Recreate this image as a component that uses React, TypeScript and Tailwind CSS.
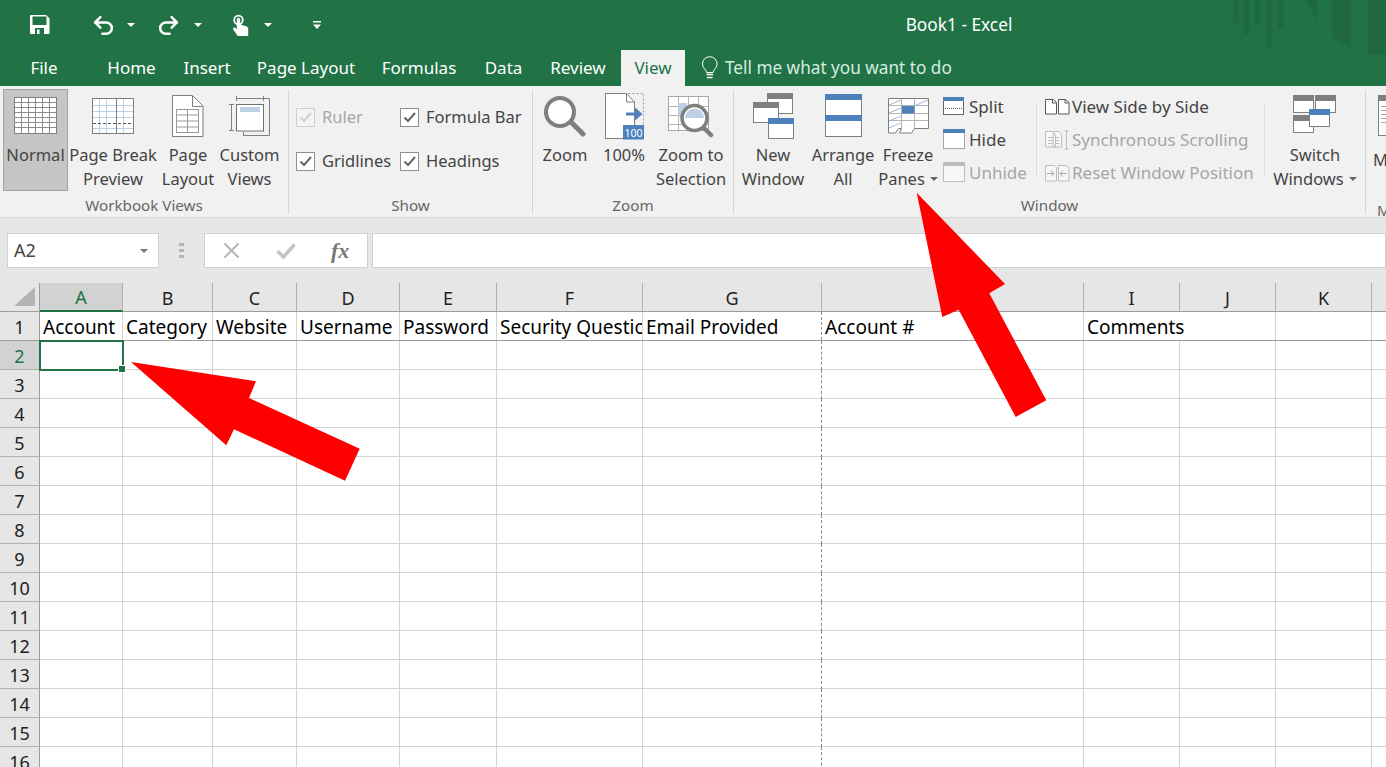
import type { ReactNode } from "react";
import { Undo2, Redo2 } from "lucide-react";

const BLUE = "#4e81bb";
const LINE = "#7f7f7f";

const columns = [
  { label: "A", w: "w-[83px]", selected: true },
  { label: "B", w: "w-[90px]" },
  { label: "C", w: "w-[84px]" },
  { label: "D", w: "w-[103px]" },
  { label: "E", w: "w-[97px]" },
  { label: "F", w: "w-[146px]" },
  { label: "G", w: "w-[179px]" },
  { label: "", w: "w-[262px]" },
  { label: "I", w: "w-[96px]" },
  { label: "J", w: "w-[96px]" },
  { label: "K", w: "w-[96px]" },
  { label: "", w: "w-[60px]" },
];

const firstRow = ["Account", "Category", "Website", "Username", "Password", "Security Question", "Email Provided", "Account #", "Comments", "", "", ""];
const rows = Array.from({ length: 15 }, (_, i) => i + 2);

const tabs = [
  { name: "File", w: "w-[88px]" },
  { name: "Home", w: "w-[77px] ml-[5px]" },
  { name: "Insert", w: "w-[74px]" },
  { name: "Page Layout", w: "w-[124px]" },
  { name: "Formulas", w: "w-[102px]" },
  { name: "Data", w: "w-[67px]" },
  { name: "Review", w: "w-[82px]" },
];

function Caret({ color = "#fff", className = "" }: { color?: string; className?: string }) {
  return (
    <svg width="8" height="4" viewBox="0 0 8 4" className={className}>
      <path d="M0 0h8L4 4z" fill={color} />
    </svg>
  );
}

function Icon({ box, children, className = "" }: { box: [number, number, number, number]; children: ReactNode; className?: string }) {
  return (
    <svg width={box[2]} height={box[3]} viewBox={box.join(" ")} fill="none" className={`flex-none ${className}`}>
      {children}
    </svg>
  );
}

function SaveIcon() {
  return (
    <Icon box={[30, 14, 20, 20]} className="ml-[30px]">
      <path d="M31 14h15l3.500 3.500V32a1 1 0 0 1-1 1H31a1 1 0 0 1-1-1V15a1 1 0 0 1 1-1z" fill="#fff" />
      <rect x="32.500" y="15.500" width="14" height="8.500" fill="#217346" />
      <rect x="35" y="27" width="9" height="6" fill="#217346" />
      <rect x="37" y="28.500" width="2.500" height="4.500" fill="#fff" />
    </Icon>
  );
}

function TouchIcon() {
  return (
    <Icon box={[230, 12, 18, 23]} className="ml-[29px]">
      <circle cx="237.500" cy="18" r="4.300" stroke="#fff" strokeWidth="1.800" />
      <path d="M235.800 17.500a1.700 1.700 0 0 1 3.400 0v5l6 1.800c1.400.5 2 1.300 2 2.700V34h-10.500l-4.500-6.500c-.8-1.300.8-2.700 2-1.700l1.600 1.400z" fill="#fff" />
    </Icon>
  );
}

function BulbIcon() {
  return (
    <Icon box={[700, 56, 19, 24]}>
      <path d="M706.500 72.500c0-3-4-4-4-8.500a7.300 7.300 0 0 1 14.600 0c0 4.500-4 5.500-4 8.500z" stroke="#fff" strokeWidth="1" />
      <path d="M706.500 74.500h6.600M707 77.500h5.600" stroke="#fff" strokeWidth="1.400" />
    </Icon>
  );
}

function Watermark() {
  return (
    <svg width="160" height="56" viewBox="1226 0 160 56" className="absolute right-0 top-0">
      <g fill="#1f6840">
        <rect x="1233" width="5.500" height="23" />
        <rect x="1244" width="5.500" height="34" />
        <rect x="1255" width="5.500" height="23" />
        <rect x="1266" width="5.500" height="47" />
        <rect x="1278" width="5.500" height="29" />
        <path d="M1305 0h12v20z" />
        <path d="M1332 0h19v48l-19-10z" />
        <path d="M1368 0h18v55h-18z" />
      </g>
    </svg>
  );
}

function NormalIcon() {
  return (
    <Icon box={[14, 97, 43, 37]} className="mt-[7px]">
      <rect x="14.500" y="97.500" width="42" height="36" fill="#fff" stroke={LINE} />
      <path d="M21.500 98v35M28.500 98v35M35.500 98v35M42.500 98v35M49.500 98v35M15 102.500h41M15 107.500h41M15 112.500h41M15 117.500h41M15 122.500h41M15 127.500h41" stroke="#8c8c8c" />
    </Icon>
  );
}

function PageBreakIcon() {
  return (
    <Icon box={[92, 98, 42, 36]} className="mt-[8px]">
      <rect x="92.500" y="98.500" width="41" height="35" fill="#fff" />
      <path d="M99.500 99v34M106.500 99v34M123.500 99v34M104 105.500h29M93 105.500h29M93 111.500h40M93 117.500h40M93 128.500h40" stroke="#bcd0e6" />
      <path d="M116.500 99v34" stroke="#7f7f7f" />
      <path d="M93 123.500h40" stroke="#555" strokeDasharray="3 2" />
      <rect x="92.500" y="98.500" width="41" height="35" stroke={LINE} />
    </Icon>
  );
}

function PageLayoutIcon() {
  return (
    <Icon box={[172, 95, 32, 43]} className="mt-[5px]">
      <path d="M172.500 95.500h20l10.500 10.500v30.500h-30.500z" fill="#fff" stroke={LINE} />
      <path d="M192.500 96v10.500h10" stroke={LINE} />
      <rect x="176.500" y="109.500" width="22" height="23" stroke="#9a9a9a" />
      <path d="M187.500 110v22M177 115h21M177 121h21M177 127h21" stroke="#9a9a9a" />
    </Icon>
  );
}

function CustomViewsIcon() {
  return (
    <Icon box={[228, 96, 43, 42]} className="mt-[6px]">
      <path d="M236.500 96v5M263.500 96v5M237 98.500h26" stroke={LINE} />
      <path d="M229 104.500h5M229 130.500h5M231.500 105v25" stroke={LINE} />
      <path d="M264 98.500h5.500v37H243.500V132" stroke={LINE} />
      <rect x="236.500" y="104.500" width="27" height="26.500" fill="#fff" stroke="#6f6f6f" />
      <rect x="240" y="107" width="20" height="5" fill="#bccfe3" />
    </Icon>
  );
}

function ZoomIcon() {
  return (
    <Icon box={[545, 95, 42, 43]} className="mt-[5px]">
      <circle cx="561" cy="112" r="14" fill="#fff" stroke={LINE} strokeWidth="4" />
      <path d="M572 122l12 12" stroke={LINE} strokeWidth="5" strokeLinecap="round" />
    </Icon>
  );
}

function HundredIcon() {
  return (
    <Icon box={[604, 92, 41, 48]} className="mt-[2px]">
      <path d="M605.500 138.500h38v-45h-38" stroke="#9a9a9a" strokeDasharray="2 2" />
      <path d="M605.500 93.500h21l8 8.500v36.500h-29z" fill="#fff" stroke={LINE} />
      <path d="M626.500 94v8h8" stroke={LINE} />
      <path d="M626 112.500h9v-5l7.500 6.500-7.500 6.500v-5h-9z" fill={BLUE} />
      <rect x="623" y="125" width="21" height="14.500" fill={BLUE} />
      <text x="633.500" y="136.500" textAnchor="middle" fill="#fff" fontSize="10.500" fontFamily="Noto Sans, sans-serif">100</text>
    </Icon>
  );
}

function ZoomSelectionIcon() {
  return (
    <Icon box={[670, 95, 46, 43]} className="mt-[5px]">
      <rect x="670.500" y="96.500" width="40" height="34" fill="#fff" stroke="#a6a6a6" />
      <path d="M680.500 97v33M690.500 97v33M700.500 97v33M671 106.500h39M671 115.500h39M671 124.500h39" stroke="#b5b5b5" />
      <rect x="680" y="103" width="9" height="14" fill="#bcd0e6" />
      <circle cx="696.500" cy="118" r="12.500" fill="#fff" />
      <path d="M687 118a9.500 9.500 0 0 1 19 0z" fill="#bcd0e6" />
      <circle cx="696.500" cy="118" r="12.500" stroke={LINE} strokeWidth="3.500" />
      <path d="M706 128l7 7" stroke={LINE} strokeWidth="4.500" strokeLinecap="round" />
    </Icon>
  );
}

function MiniWindow({ x, y, w, h, bar }: { x: number; y: number; w: number; h: number; bar: string }) {
  return (
    <>
      <rect x={x + 0.5} y={y + 0.5} width={w} height={h} fill="#fff" stroke={LINE} />
      <rect x={x} y={y} width={w + 1} height="6" fill={bar} />
    </>
  );
}

function NewWindowIcon() {
  return (
    <Icon box={[753, 93, 41, 46]} className="mt-[3px]">
      <MiniWindow x={767} y={93} w={25} h={20} bar="#7f7f7f" />
      <MiniWindow x={753} y={102} w={25} h={20} bar="#7f7f7f" />
      <MiniWindow x={768} y={118} w={25} h={20} bar={BLUE} />
    </Icon>
  );
}

function ArrangeIcon() {
  return (
    <Icon box={[825, 94, 37, 44]} className="mt-[4px]">
      <rect x="825.500" y="94.500" width="36" height="42" fill="#fff" stroke={LINE} />
      <rect x="825" y="94" width="37" height="6" fill={BLUE} />
      <rect x="825" y="115" width="37" height="6" fill={BLUE} />
    </Icon>
  );
}

function FreezeIcon() {
  return (
    <Icon box={[888, 98, 41, 36]} className="mt-[8px]">
      <path d="M888.500 98.500h40v30h-14l-3 4.500h-12l2-4.500h-3l-3 4.500h-7z" fill="#fff" stroke={LINE} />
      <path d="M889 105.500h39M889 113.500h39M889 120.500h39M901.500 99v29M914.500 99v29" stroke="#b5b5b5" />
      <path d="M889 105l12-5M889 113l12-5M889 121l12-5M889 128l12-5M914 106l14-6" stroke="#9dbbdc" />
      <rect x="902" y="106" width="12.500" height="7.500" fill={BLUE} />
    </Icon>
  );
}

function SwitchIcon() {
  return (
    <Icon box={[1293, 95, 44, 39]} className="mt-[5px]">
      <MiniWindow x={1293} y={95} w={20} h={17} bar="#7f7f7f" />
      <MiniWindow x={1315} y={95} w={20} h={17} bar="#7f7f7f" />
      <MiniWindow x={1293} y={115} w={20} h={17} bar="#7f7f7f" />
      <MiniWindow x={1309} y={109} w={20} h={17} bar={BLUE} />
    </Icon>
  );
}

function SplitIcon() {
  return (
    <Icon box={[943, 97, 22, 19]}>
      <rect x="943.500" y="97.500" width="20" height="17" fill="#fff" stroke="#666" />
      <rect x="943" y="97" width="21" height="4" fill={BLUE} />
      <path d="M945 108.500h17" stroke="#555" strokeDasharray="1 1" />
    </Icon>
  );
}

function HideIcon() {
  return (
    <Icon box={[943, 129, 23, 21]}>
      <rect x="943.500" y="129.500" width="21" height="19" fill="#fff" stroke="#555" strokeDasharray="1 1" />
      <rect x="943" y="129" width="22" height="4" fill={BLUE} />
    </Icon>
  );
}

function UnhideIcon() {
  return (
    <Icon box={[943, 162, 23, 21]}>
      <rect x="943.500" y="162.500" width="21" height="19" fill="#f7f7f7" stroke="#bdbdbd" />
      <rect x="943" y="162" width="22" height="4" fill="#bdbdbd" />
    </Icon>
  );
}

function SideBySideIcon() {
  return (
    <Icon box={[1045, 98, 25, 16]}>
      <path d="M1045.500 98.500h8l3 3v11.500h-11zM1058.500 98.500h7l3.500 3v11.500h-10.500z" fill="#fff" stroke="#555" />
      <path d="M1052.500 99v3h3.500M1065 99v3h3.500" stroke="#555" />
    </Icon>
  );
}

function SyncIcon() {
  return (
    <Icon box={[1045, 130, 25, 22]}>
      <path d="M1045.500 132.500h7l3 3v12.500h-10zM1053.500 132.500h5l3 3v12.500h-8.500z" fill="#f7f7f7" stroke="#bdbdbd" />
      <path d="M1048 138.500h5M1048 141.500h5M1048 144.500h5M1055 138.500h4M1055 141.500h4M1055 144.500h4" stroke="#bdbdbd" />
      <path d="M1066.500 131v20M1064.500 133l2-2 2 2M1064.500 149l2 2 2-2" stroke="#bdbdbd" />
    </Icon>
  );
}

function ResetIcon() {
  return (
    <Icon box={[1045, 163, 25, 18]}>
      <path d="M1045.500 164.500h9l2 2v13.500h-11zM1058.500 164.500h8l2.500 2.500v13h-10.500z" fill="#f7f7f7" stroke="#bdbdbd" />
      <path d="M1047 172.500h7M1051 169.500l3 3-3 3M1067 172.500h-7M1063 169.500l-3 3 3 3" stroke="#a6a6a6" />
    </Icon>
  );
}

function MacroIcon() {
  return (
    <Icon box={[1378, 95, 8, 44]} className="mt-[5px]">
      <rect x="1378.500" y="95.500" width="20" height="40" fill="#fff" stroke={LINE} />
      <rect x="1378" y="95" width="20" height="6" fill="#7f7f7f" />
      <path d="M1381 106.500h8M1381 110.500h8M1381 114.500h8M1381 118.500h8M1381 122.500h8" stroke="#a6a6a6" />
    </Icon>
  );
}

function BigButton({ lines, icon, w, caret, active, className = "" }: { lines: string[]; icon: ReactNode; w: string; caret?: boolean; active?: boolean; className?: string }) {
  return (
    <div className={`${w} ${className} h-[100px] flex-none flex flex-col items-center ${active ? "bg-[#c5c5c5] outline outline-1 outline-[#a3a3a3]" : ""}`}>
      <div className="h-[53px] flex-none flex justify-center items-start">{icon}</div>
      {lines.map((line, i) => (
        <div key={line} className="leading-[24px] whitespace-nowrap flex items-center gap-[5px]">
          {line}
          {caret && i === lines.length - 1 && <Caret color="#666" />}
        </div>
      ))}
    </div>
  );
}

function Group({ label, w, children }: { label: string; w: string; children: ReactNode }) {
  return (
    <div className={`${w} flex-none mt-[4px] h-[124px] flex flex-col border-r border-[#d4d4d4]`}>
      <div className="h-[100px] flex">{children}</div>
      <div className="h-[24px] flex items-end justify-center text-[15.2px] leading-[18px] text-[#666]">{label}</div>
    </div>
  );
}

function Check({ label, disabled }: { label: string; disabled?: boolean }) {
  return (
    <div className={`flex items-center gap-[7px] h-[44px] ${disabled ? "text-[#a6a6a6]" : ""}`}>
      <div className={`w-[19px] h-[19px] flex-none border flex items-center justify-center ${disabled ? "border-[#cfcfcf] bg-[#f4f4f4]" : "border-[#8f8f8f] bg-white"}`}>
        <svg width="13" height="11" viewBox="0 0 13 11" fill="none">
          <path d="M1.500 5.500l3.500 3.500 7-8" stroke={disabled ? "#cfcfcf" : "#666"} strokeWidth="2" />
        </svg>
      </div>
      {label}
    </div>
  );
}

function SmallRow({ icon, label, slot, disabled }: { icon: ReactNode; label: string; slot: string; disabled?: boolean }) {
  return (
    <div className={`h-[33px] flex items-center whitespace-nowrap text-[17px] ${disabled ? "text-[#a6a6a6]" : ""}`}>
      <div className={`${slot} flex-none flex`}>{icon}</div>
      {label}
    </div>
  );
}

function Ribbon() {
  return (
    <div className="h-[132px] flex bg-[#f1f1f1] border-b border-[#d5d5d5] text-[#444] text-[16.500px] overflow-hidden">
      <Group label="Workbook Views" w="w-[289px]">
        <BigButton lines={["Normal"]} icon={<NormalIcon />} w="w-[63px]" active className="ml-[4px]" />
        <BigButton lines={["Page Break", "Preview"]} icon={<PageBreakIcon />} w="w-[90px]" className="ml-[1px]" />
        <BigButton lines={["Page", "Layout"]} icon={<PageLayoutIcon />} w="w-[60px]" />
        <BigButton lines={["Custom", "Views"]} icon={<CustomViewsIcon />} w="w-[63px]" />
      </Group>
      <Group label="Show" w="w-[244px]">
        <div className="grid grid-cols-[104px_1fr] content-start pl-[7px] pt-[5px]">
          <Check label="Ruler" disabled />
          <Check label="Formula Bar" />
          <Check label="Gridlines" />
          <Check label="Headings" />
        </div>
      </Group>
      <Group label="Zoom" w="w-[201px]">
        <BigButton lines={["Zoom"]} icon={<ZoomIcon />} w="w-[50px]" className="ml-[7px]" />
        <BigButton lines={["100%"]} icon={<HundredIcon />} w="w-[52px]" className="ml-[8px]" />
        <BigButton lines={["Zoom to", "Selection"]} icon={<ZoomSelectionIcon />} w="w-[78px]" className="ml-[2px]" />
      </Group>
      <Group label="Window" w="w-[632px]">
        <BigButton lines={["New", "Window"]} icon={<NewWindowIcon />} w="w-[68px]" className="ml-[5px]" />
        <BigButton lines={["Arrange", "All"]} icon={<ArrangeIcon />} w="w-[68px]" className="ml-[2px]" />
        <BigButton lines={["Freeze", "Panes"]} icon={<FreezeIcon />} w="w-[60px]" caret className="ml-[1px]" />
        <div className="w-[93px] ml-[5px] flex-none">
          <SmallRow icon={<SplitIcon />} label="Split" slot="w-[26px]" />
          <SmallRow icon={<HideIcon />} label="Hide" slot="w-[26px]" />
          <SmallRow icon={<UnhideIcon />} label="Unhide" slot="w-[26px]" disabled />
        </div>
        <div className="w-px h-[73px] mt-[13px] flex-none bg-[#dcdcdc]" />
        <div className="w-[219px] ml-[8px] flex-none">
          <SmallRow icon={<SideBySideIcon />} label="View Side by Side" slot="w-[27px]" />
          <SmallRow icon={<SyncIcon />} label="Synchronous Scrolling" slot="w-[27px]" disabled />
          <SmallRow icon={<ResetIcon />} label="Reset Window Position" slot="w-[27px]" disabled />
        </div>
        <div className="w-px h-[73px] mt-[13px] flex-none bg-[#dcdcdc]" />
        <BigButton lines={["Switch", "Windows"]} icon={<SwitchIcon />} w="w-[90px]" caret className="ml-[5px]" />
      </Group>
      <div className="flex-none pl-[7px] mt-[4px]">
        <div className="h-[100px]">
          <div className="h-[53px] pl-[5px]"><MacroIcon /></div>
          <div className="leading-[24px]">Macros</div>
        </div>
        <div className="h-[24px] flex items-end pl-[4px] text-[15.2px] leading-[18px] text-[#666]">Macros</div>
      </div>
    </div>
  );
}

function FormulaBar() {
  return (
    <div className="h-[65px] bg-[#e6e6e6] flex items-start pt-[15px] pl-[7px] text-[18px] text-[#444]">
      <div className="w-[152px] h-[35px] bg-white border border-[#d0d0d0] flex items-center justify-between pl-[6px] pr-[10px]">
        A2
        <Caret color="#777" />
      </div>
      <div className="w-[45px] h-[35px] flex flex-col items-center justify-center gap-[3px]">
        <div className="w-[5px] h-[3px] bg-[#b5b5b5]" />
        <div className="w-[5px] h-[3px] bg-[#b5b5b5]" />
        <div className="w-[5px] h-[3px] bg-[#b5b5b5]" />
      </div>
      <div className="w-[164px] h-[35px] bg-white border border-[#d0d0d0] flex items-center pl-[18px]">
        <svg width="17" height="17" viewBox="0 0 17 17" fill="none">
          <path d="M1.500 1.500l14 14M15.500 1.500l-14 14" stroke="#b5b5b5" strokeWidth="2" />
        </svg>
        <svg width="20" height="16" viewBox="0 0 20 16" fill="none" className="ml-[36px]">
          <path d="M1.500 8l6 6L18.500 1.500" stroke="#c4c4c4" strokeWidth="3.500" />
        </svg>
        <span className="ml-[35px] font-['Liberation_Serif',serif] italic font-bold text-[22px] leading-none text-[#777]">fx</span>
      </div>
      <div className="ml-[4px] flex-1 h-[35px] bg-white border border-[#d0d0d0]" />
    </div>
  );
}

function Sheet() {
  return (
    <div className="text-[18px] text-black">
      <div className="h-[29px] flex bg-[#e6e6e6] border-b border-[#9c9c9c]">
        <div className="w-[40px] flex-none border-r border-[#9c9c9c] flex items-end justify-end pr-[3px] pb-[5px]">
          <svg width="22" height="19" viewBox="0 0 22 19">
            <path d="M21 0v19H0z" fill="#b4b4b4" />
          </svg>
        </div>
        {columns.map((c, i) => (
          <div
            key={i}
            className={`${c.w} flex-none flex items-center justify-center pt-[2px] border-r border-[#b0b0b0] ${
              c.selected ? "bg-[#d2d2d2] text-[#217346] border-b-2 border-b-[#217346] h-[29px]" : "text-[#222]"
            }`}
          >
            {c.label}
          </div>
        ))}
      </div>
      <div className="h-[29px] flex border-b border-[#9c9c9c]">
        <div className="w-[40px] flex-none bg-[#e6e6e6] border-r border-[#9c9c9c] flex items-center justify-center pt-[2px] text-[#222]">1</div>
        {columns.map((c, i) => (
          <div
            key={i}
            className={`${c.w} flex-none flex items-center pl-[3px] pt-[2px] text-[19px] whitespace-nowrap ${
              i === 8 ? "overflow-visible" : "overflow-hidden border-r"
            } ${i === 6 ? "border-dashed border-[#8c8c8c]" : "border-[#d4d4d4]"}`}
          >
            {firstRow[i]}
          </div>
        ))}
      </div>
      {rows.map((n) => (
        <div key={n} className="h-[29px] flex">
          <div
            className={`w-[40px] flex-none border-b border-b-[#b0b0b0] flex items-center justify-center pt-[2px] border-r ${
              n === 2 ? "bg-[#d2d2d2] text-[#217346] border-r-[#217346]" : "bg-[#e6e6e6] text-[#222] border-r-[#9c9c9c]"
            }`}
          >
            {n}
          </div>
          {columns.map((c, i) => (
            <div
              key={i}
              className={`${c.w} flex-none relative border-b border-b-[#d4d4d4] ${i === 6 ? "" : "border-r border-r-[#d4d4d4]"}`}
            >
              {i === 6 && <div className="absolute right-0 top-0 h-[29px] border-r border-dashed border-[#8c8c8c]" />}
              {n === 2 && i === 0 && (
                <div className="absolute z-10 -left-[1px] -top-[1px] w-[85px] h-[31px] border-2 border-[#217346]">
                  <div className="absolute -right-[4px] -bottom-[4px] w-[8px] h-[8px] bg-[#217346] border border-white" />
                </div>
              )}
            </div>
          ))}
        </div>
      ))}
    </div>
  );
}

export default function App() {
  return (
    <div className="relative w-[1386px] h-[767px] overflow-hidden bg-white font-['Noto_Sans',sans-serif]">
      <div className="relative h-[50px] bg-[#217346] flex items-center text-white">
        <SaveIcon />
        <Undo2 size={25} strokeWidth={2.4} className="ml-[41px] flex-none" />
        <Caret className="ml-[11px] flex-none" />
        <Redo2 size={25} strokeWidth={2.4} className="ml-[21px] flex-none" />
        <Caret className="ml-[13px] flex-none" />
        <TouchIcon />
        <Caret className="ml-[15px] flex-none" />
        <svg width="8" height="8" viewBox="0 0 8 8" className="ml-[41px] flex-none">
          <path d="M0 0h8v1.500H0zM0 3.500h8L4 8z" fill="#fff" />
        </svg>
        <Watermark />
        <div className="relative w-[200px] ml-[538px] text-center text-[17.300px]">Book1 - Excel</div>
      </div>
      <div className="h-[36px] bg-[#217346] flex items-stretch text-[17px] text-white">
        {tabs.map((t) => (
          <div key={t.name} className={`${t.w} flex-none flex items-center justify-center`}>{t.name}</div>
        ))}
        <div className="w-[64px] ml-[2px] flex-none bg-[#f1f1f1] text-[#217346] flex items-center justify-center">View</div>
        <div className="ml-[15px] flex items-center gap-[6px] text-[17.200px] text-[#d7ece1]">
          <BulbIcon />
          Tell me what you want to do
        </div>
      </div>
      <Ribbon />
      <FormulaBar />
      <Sheet />
      <svg width="1386" height="767" className="absolute inset-0 z-20 pointer-events-none">
        <path d="M131 362L256 381.300L249 398L359.700 448.700L345 480.700L234 429.300L226.300 445.300z" fill="#ff0000" />
        <path d="M916.700 192.700L1005 284L989.300 293.300L1046.300 400.300L1015.700 417L958.700 309.700L942.300 317z" fill="#ff0000" />
      </svg>
    </div>
  );
}
